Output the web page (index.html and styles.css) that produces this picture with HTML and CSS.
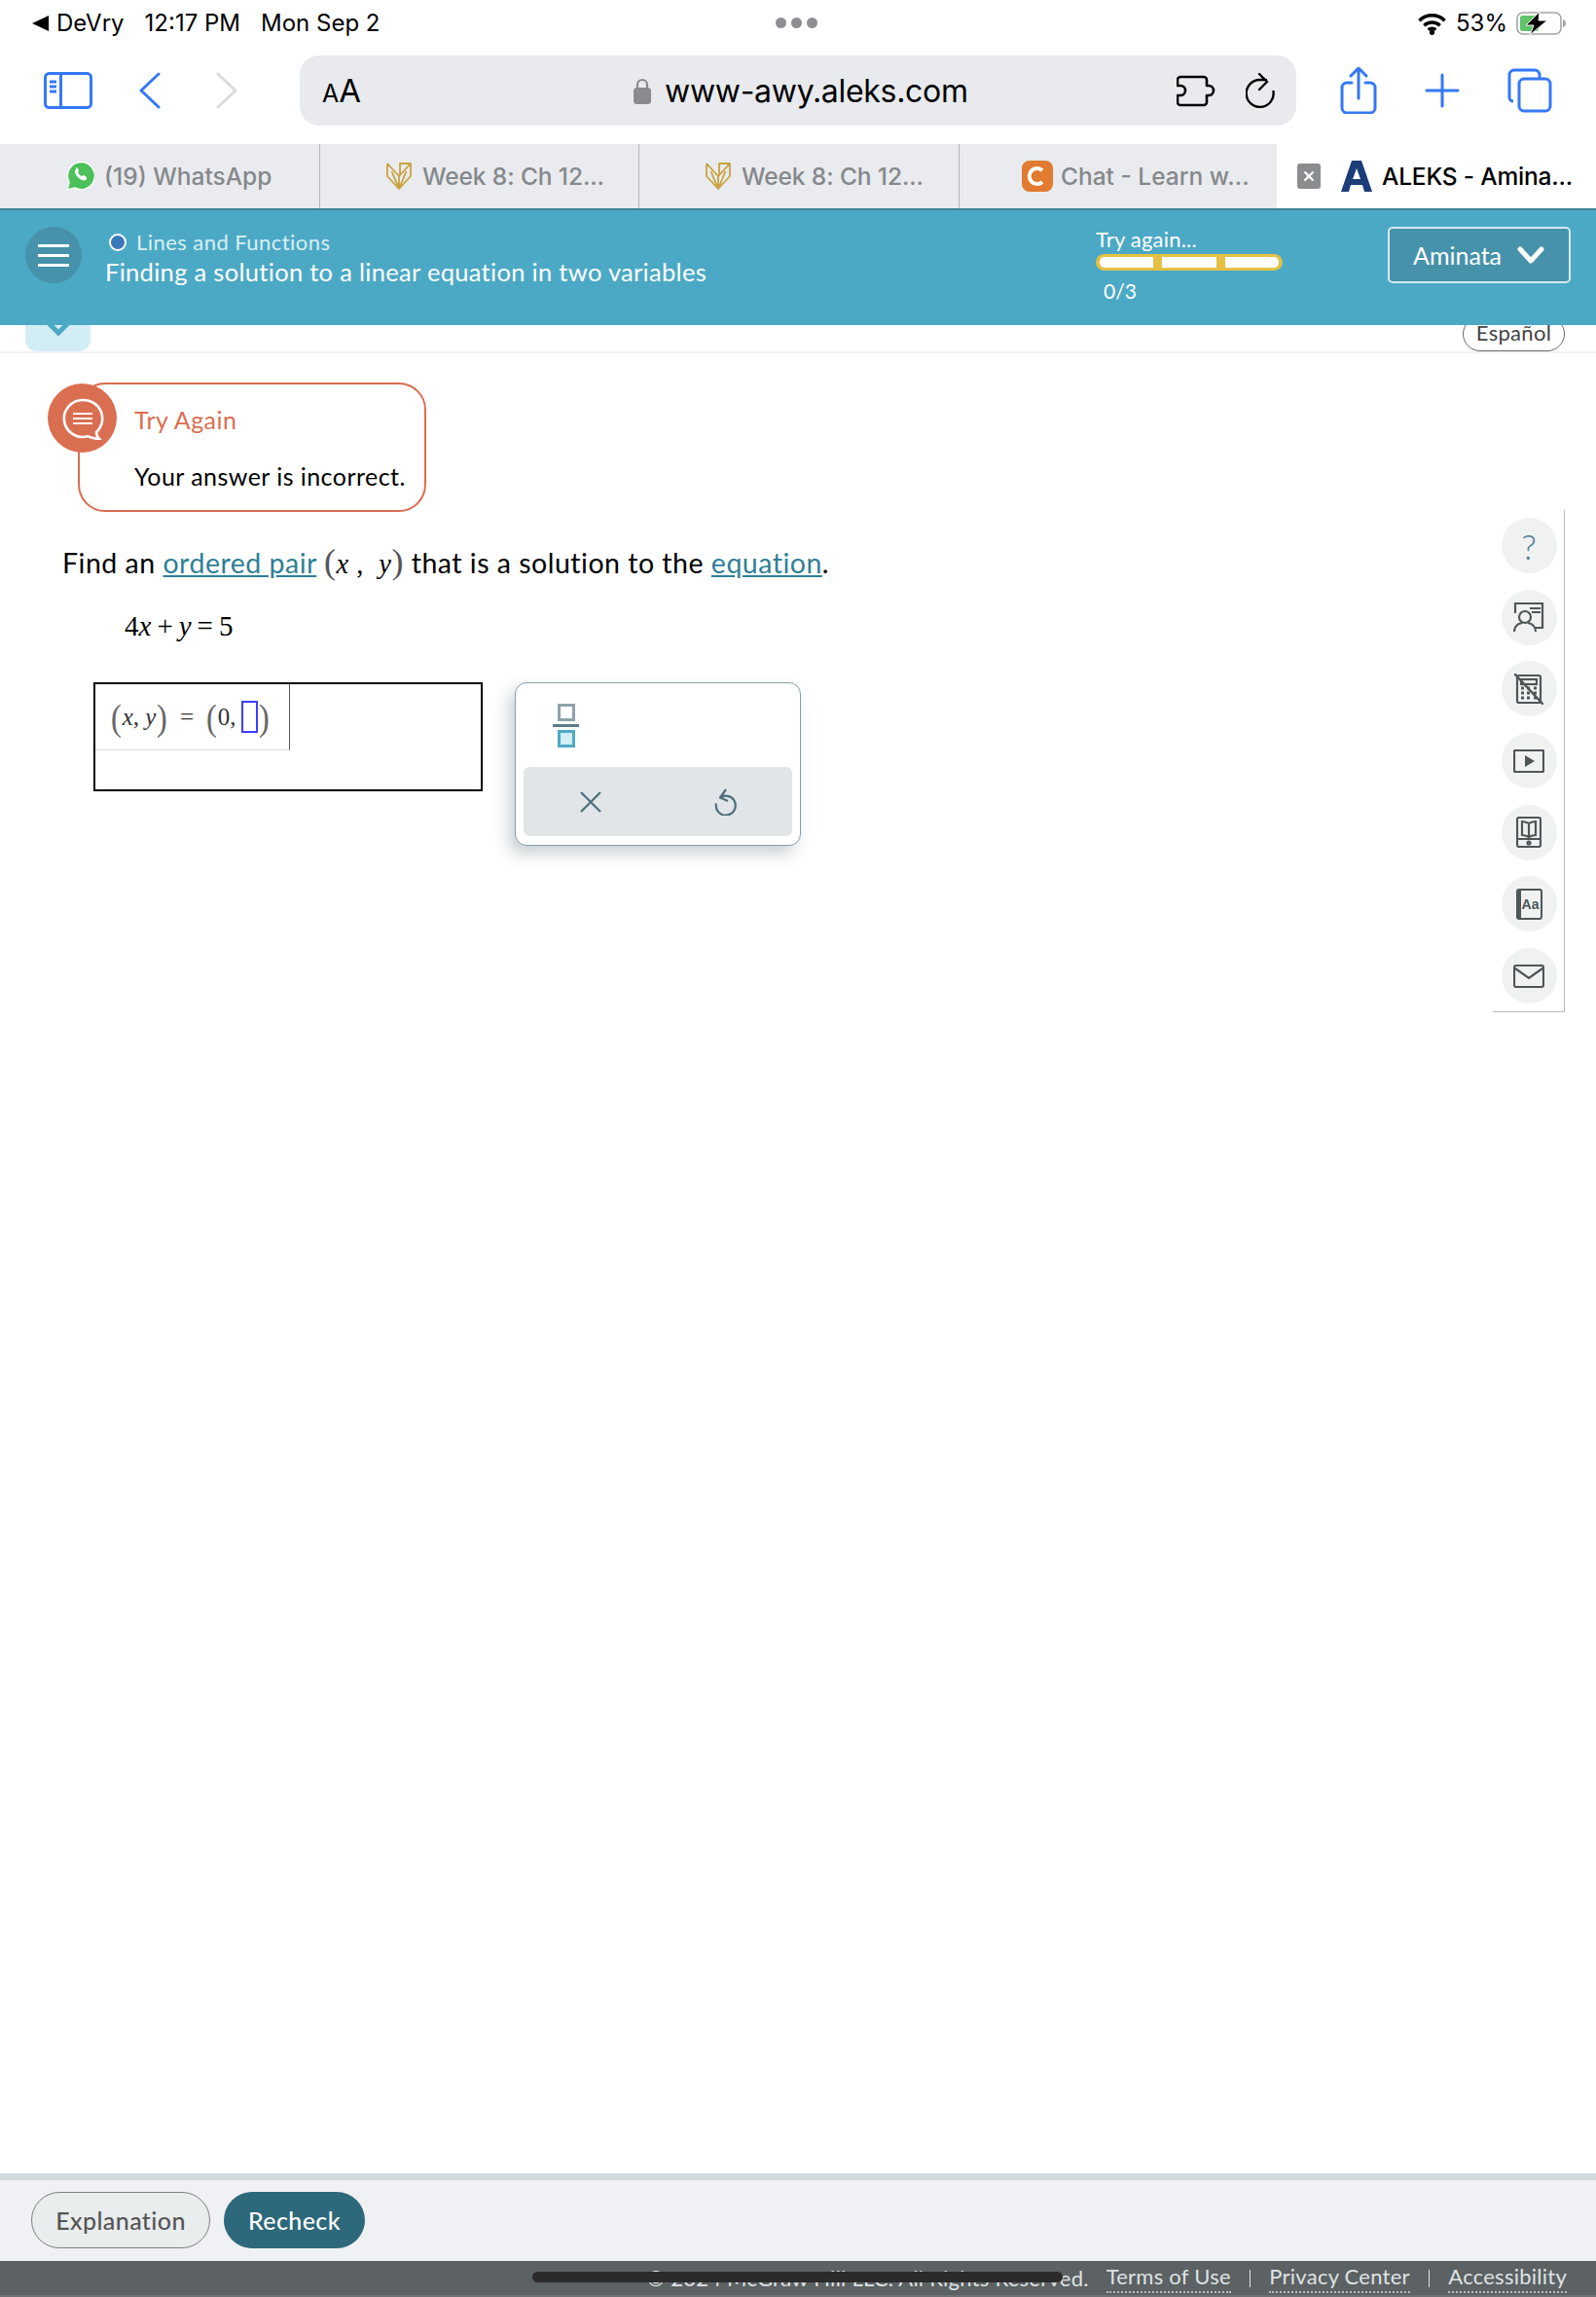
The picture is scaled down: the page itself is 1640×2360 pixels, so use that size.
FILE: index.html
```html
<!DOCTYPE html>
<html lang="en">
<head>
  <meta charset="UTF-8">
  <meta name="viewport" content="width=device-width, initial-scale=1.0">
  <title>ALEKS - Aminata</title>
  <link rel="stylesheet" href="styles.css">
</head>
<body>

  <div class="status-bar">
    <svg class="status-back" width="17" height="16" viewBox="0 0 17 16"><path d="M0 8 17 0v16z" fill="#000"/></svg>
    <span class="status-carrier">DeVry</span>
    <span class="status-time">12:17 PM</span>
    <span class="status-date">Mon Sep 2</span>
    <div class="status-dots"><i></i><i></i><i></i></div>
    <svg width="31" height="24" viewBox="0 0 28 22"><path d="M2 8.500a17 17 0 0 1 24 0M6.500 13a11 11 0 0 1 15 0M10.500 17a5.500 5.500 0 0 1 7 0" fill="none" stroke="#000" stroke-width="3.200"/><circle cx="14" cy="19.500" r="2.400" fill="#000"/></svg>
    <span class="status-pct">53%</span>
    <svg class="status-battery" width="52" height="24" viewBox="0 0 52 24"><rect x="1" y="1" width="45" height="22" rx="6" fill="none" stroke="#a5a5a5" stroke-width="1.600"/><rect x="4" y="4" width="19" height="16" rx="2.500" fill="#5fc368"/><path d="M48 8c2 .5 3 2 3 4s-1 3.500-3 4z" fill="#a5a5a5"/><path d="M24 0 10 14h8l-4 10 18-15h-9z" fill="#000" stroke="#fff" stroke-width="1"/></svg>
  </div>

  <div class="toolbar">
    <svg class="tool-sidebar" width="50" height="38" viewBox="0 0 50 38" fill="none" stroke="#3478f6" stroke-width="3"><rect x="1.500" y="1.500" width="47" height="35" rx="4"/><path d="M17.500 1.500v35M6 10h7M6 15h7M6 20h7"/></svg>
    <svg class="tool-back" width="22" height="38" viewBox="0 0 22 38" fill="none" stroke="#3478f6" stroke-width="3" stroke-linecap="round" stroke-linejoin="round"><path d="M20 2 2 19l18 17"/></svg>
    <svg class="tool-forward" width="22" height="38" viewBox="0 0 22 38" fill="none" stroke="#d9dbde" stroke-width="3" stroke-linecap="round" stroke-linejoin="round"><path d="M2 2l18 17L2 36"/></svg>
    <div class="address-bar">
      <span class="address-aa"><small>A</small>A</span>
      <div class="address-url">
        <svg width="18" height="27" viewBox="0 0 18 27"><path d="M4 12V7a5 5 0 0 1 10 0v5" fill="none" stroke="#8a8b8f" stroke-width="2.200"/><rect y="10" width="18" height="17" rx="3.500" fill="#8a8b8f"/></svg>
        <span>www-awy.aleks.com</span>
      </div>
      <svg class="address-puzzle" width="41" height="33" viewBox="0 0 41 33" fill="none" stroke="#000" stroke-width="2.600" stroke-linejoin="round"><path d="M4 2h24a3 3 0 0 1 3 3v6h2a5 5 0 0 1 0 10h-2v7a3 3 0 0 1-3 3H4a3 3 0 0 1-3-3v-7h3a5 5 0 0 0 0-10H1V5a3 3 0 0 1 3-3z"/></svg>
      <svg class="address-reload" width="30" height="36" viewBox="0 0 30 36" fill="none" stroke="#000" stroke-width="2.400" stroke-linecap="round" stroke-linejoin="round"><path d="M28.500 19A14 14 0 1 1 14.500 7H21M14 1l8 8-8 8"/></svg>
    </div>
    <svg class="tool-share" width="38" height="48" viewBox="0 0 38 48" fill="none" stroke="#3478f6" stroke-width="3" stroke-linecap="round" stroke-linejoin="round"><path d="M12 16H7a5 5 0 0 0-5 5v21a5 5 0 0 0 5 5h24a5 5 0 0 0 5-5V21a5 5 0 0 0-5-5h-5M19 32V2M11 9l8-8 8 8"/></svg>
    <svg class="tool-plus" width="36" height="36" viewBox="0 0 36 36" fill="none" stroke="#3478f6" stroke-width="3" stroke-linecap="round"><path d="M18 2v32M2 18h32"/></svg>
    <svg class="tool-tabs" width="46" height="46" viewBox="0 0 46 46" fill="none" stroke="#3478f6" stroke-width="3"><path d="M6 34a4 4 0 0 1-4-4V7a5 5 0 0 1 5-5h21a5 5 0 0 1 5 5v4"/><rect x="12" y="11" width="32" height="33" rx="5"/></svg>
  </div>

  <div class="tab-strip">
    <div class="tab">
      <svg width="29" height="30" viewBox="0 0 29 30"><path d="M1 29l2-8a14 14 0 1 1 6 6z" fill="#4cc15a" stroke="#fff" stroke-width="1.500"/><path d="M10 8c-2 2-1 5 2 8s6 4 8 3c1-1 1-2 1-3l-3-2-2 1c-2-1-3-2-4-4l1-2-2-3c-1 0-1 1-1 2z" fill="#fff"/></svg>
      <span>(19) WhatsApp</span>
    </div>
    <div class="tab tab-week">
      <svg width="26" height="28" viewBox="0 0 26 28" fill="none" stroke="#c9a23e" stroke-width="1.800" stroke-linejoin="round"><path d="M1 1v13l12 13 12-13V1H14v13M1 1l12 13v13M25 1 13 14M5.500 9 13 27M20.500 9 13 27"/></svg>
      <span>Week 8: Ch 12...</span>
    </div>
    <div class="tab tab-week">
      <svg width="26" height="28" viewBox="0 0 26 28" fill="none" stroke="#c9a23e" stroke-width="1.800" stroke-linejoin="round"><path d="M1 1v13l12 13 12-13V1H14v13M1 1l12 13v13M25 1 13 14M5.500 9 13 27M20.500 9 13 27"/></svg>
      <span>Week 8: Ch 12...</span>
    </div>
    <div class="tab tab-chat">
      <svg width="32" height="32" viewBox="0 0 32 32"><rect width="32" height="32" rx="8" fill="#e07b2f"/><path d="M21 10a8 8 0 1 0 0 12" fill="none" stroke="#fff" stroke-width="4"/></svg>
      <span>Chat - Learn w...</span>
    </div>
    <div class="tab tab-active">
      <svg class="tab-close" width="24" height="26" viewBox="0 0 24 26"><rect width="24" height="26" rx="3" fill="#8a8c90"/><path d="M7.500 8.500l9 9M16.500 8.500l-9 9" stroke="#fff" stroke-width="2.400"/></svg>
      <svg class="aleks-logo" width="32" height="32" viewBox="0 0 32 32"><path d="M11 0h10l11 32h-8l-2-7H10l-2 7H0zM16 8l-4 11h8z" fill="#1c3e78" fill-rule="evenodd"/></svg>
      <span>ALEKS - Amina...</span>
    </div>
  </div>

  <header class="course-header">
    <button class="menu-btn"><i></i><i></i><i></i></button>
    <div class="topic">
      <div class="topic-section"><span class="topic-dot"></span>Lines and Functions</div>
      <div class="topic-title">Finding a solution to a linear equation in two variables</div>
    </div>
    <div class="progress">
      <div class="progress-label">Try again...</div>
      <div class="progress-bar"><i></i><i></i><i></i></div>
      <div class="progress-count">0/3</div>
    </div>
    <button class="user-btn">Aminata
      <svg width="28" height="20" viewBox="0 0 28 20" fill="none" stroke="#fff" stroke-width="5" stroke-linecap="round" stroke-linejoin="round"><path d="M3 4l11 12L25 4"/></svg>
    </button>
  </header>

  <div class="sub-strip">
    <div class="collapse-tab">
      <svg width="30" height="16" viewBox="0 0 30 16" fill="none" stroke="#4ca9c5" stroke-width="5"><path d="M3 0l12 12L27 0"/></svg>
    </div>
    <div class="lang-pill">Español</div>
  </div>

  <main class="main">
    <div class="content">
      <div class="feedback">
        <div class="feedback-icon">
          <svg width="44" height="44" viewBox="0 0 44 44" fill="none" stroke="#fff"><path d="M22 3a19 19 0 1 0 5 37.300c4 1.500 8 2.700 12 2.700-2-2-3-4-3-7A19 19 0 0 0 22 3z" stroke-width="2.600"/><path d="M12 17h20M12 22h20M12 27h20" stroke-width="2"/></svg>
        </div>
        <div class="feedback-title">Try Again</div>
        <div class="feedback-text">Your answer is incorrect.</div>
      </div>

      <p class="question">Find an <a href="#">ordered pair</a> <span class="math"><span class="paren">(</span><em>x</em> , &nbsp;<em>y</em><span class="paren">)</span></span> that is a solution to the <a href="#">equation</a>.</p>
      <p class="equation"><span>4<em>x</em></span><span>+</span><span><em>y</em></span><span>=</span><span>5</span></p>

      <div class="work-row">
        <div class="answer-box">
          <div class="answer-cell">
            <span class="big-paren">(</span><em>x</em>,&nbsp;<em>y</em><span class="big-paren">)</span>
            <span class="answer-eq">=</span>
            <span class="big-paren">(</span>0,<span class="cursor-box"></span><span class="big-paren">)</span>
          </div>
        </div>
        <div class="palette">
          <div class="palette-top">
            <div class="fraction"><span class="frac-top"></span><span class="frac-bar"></span><span class="frac-bottom"></span></div>
          </div>
          <div class="palette-actions">
            <svg width="22" height="22" viewBox="0 0 22 22" fill="none" stroke="#4d6e7c" stroke-width="2.200"><path d="M1 1l20 20M21 1 1 21"/></svg>
            <svg width="24" height="28" viewBox="0 0 24 28" fill="none" stroke="#4d6e7c" stroke-width="2.200" stroke-linejoin="round"><path d="M7 9.500a10 10 0 1 1-4 6M13 1 7 9.500l8 3.500"/></svg>
          </div>
        </div>
      </div>
    </div>

    <aside class="tool-rail">
      <button class="rail-btn"><span class="rail-help">?</span></button>
      <button class="rail-btn">
        <svg width="32" height="32" viewBox="0 0 32 32" fill="none" stroke="#4f5658" stroke-width="2.200"><path d="M2 12V2h28v25h-8M17 7h11M19 11h9"/><circle cx="12" cy="16" r="6"/><path d="M1 31c0-6 3-8 8-9M23 31c0-6-3-8-8-9"/></svg>
      </button>
      <button class="rail-btn">
        <svg width="30" height="32" viewBox="0 0 30 32" fill="none" stroke="#4f5658" stroke-width="2.200"><rect x="3" y="2" width="24" height="28" rx="2"/><rect x="7" y="6" width="16" height="5"/><path d="M7 15h3M13 15h3M20 15h3M7 20h3M13 20h3M20 20h3M7 25h3M13 25h3M20 25h3" stroke-width="3"/><path d="M0 0l30 32" stroke-width="2.400"/></svg>
      </button>
      <button class="rail-btn">
        <svg width="32" height="24" viewBox="0 0 32 24" fill="none" stroke="#4f5658" stroke-width="2.200"><rect x="1" y="1" width="30" height="22" rx="1"/><path d="M12 6l10 6-10 6z" fill="#4f5658" stroke="none"/></svg>
      </button>
      <button class="rail-btn">
        <svg width="26" height="32" viewBox="0 0 26 32" fill="none" stroke="#4f5658" stroke-width="2.200"><rect x="1" y="1" width="24" height="30" rx="2"/><path d="M1 23h24M13 7c-2-1-4-2-7-2v14c3 0 5 1 7 2 2-1 4-2 7-2V5c-3 0-5 1-7 2zM13 7v14"/><circle cx="13" cy="27" r="1.500"/></svg>
      </button>
      <button class="rail-btn">
        <span class="rail-dict">Aa</span>
      </button>
      <button class="rail-btn">
        <svg width="32" height="24" viewBox="0 0 32 24" fill="none" stroke="#4f5658" stroke-width="2.200"><rect x="1" y="1" width="30" height="22" rx="2"/><path d="M2 4l14 10L30 4"/></svg>
      </button>
    </aside>
  </main>

  <div class="action-bar">
    <button class="btn-explain">Explanation</button>
    <button class="btn-recheck">Recheck</button>
  </div>

  <footer class="page-footer">
    <span class="copyright">© 2024 McGraw Hill LLC. All Rights Reserved.</span>
    <a href="#">Terms of Use</a>
    <span class="footer-sep"></span>
    <a href="#">Privacy Center</a>
    <span class="footer-sep"></span>
    <a href="#">Accessibility</a>
    <div class="home-indicator"></div>
  </footer>

</body>
</html>
```

FILE: styles.css
```css
* {
  box-sizing: border-box;
}

html,
body {
  margin: 0;
  height: 2360px;
  overflow: hidden;
}

body {
  display: flex;
  flex-direction: column;
  background-color: #fff;
  font-family: 'Lato', 'Open Sans', sans-serif;
  color: #000;
}

button {
  font-family: inherit;
  cursor: pointer;
  padding: 0;
}

/* ios status bar */
.status-bar {
  display: flex;
  align-items: center;
  height: 47px;
  padding: 0 30px 0 33px;
  font-family: 'Inter', sans-serif;
  font-size: 24px;
}

.status-carrier {
  margin-left: 8px;
}

.status-time {
  margin-left: 21px;
}

.status-date {
  margin-left: 21px;
}

.status-dots {
  display: flex;
  gap: 5px;
  margin-left: auto;
  margin-right: 616px;
}

.status-dots i {
  width: 11px;
  height: 11px;
  border-radius: 50%;
  background-color: #8e8e93;
}

.status-pct {
  margin-left: 9px;
}

.status-battery {
  margin-left: 9px;
}

/* safari toolbar */
.toolbar {
  display: flex;
  align-items: center;
  height: 101px;
  padding-bottom: 9px;
}

.tool-sidebar {
  margin-left: 45px;
}

.tool-back {
  margin-left: 48px;
}

.tool-forward {
  margin-left: 57px;
}

.address-bar {
  display: flex;
  align-items: center;
  position: relative;
  width: 1024px;
  height: 72px;
  margin-left: 64px;
  padding: 0 22px 0 23px;
  background-color: #e8eaed;
  border-radius: 20px;
  font-family: 'Inter', sans-serif;
}

.address-aa {
  font-size: 33px;
}

.address-aa small {
  font-size: 25px;
}

.address-url {
  display: flex;
  align-items: center;
  gap: 14px;
  margin-left: 280px;
  font-size: 32px;
  letter-spacing: -0.3px;
}

.address-puzzle {
  margin-left: auto;
}

.address-reload {
  margin-left: 30px;
}

.tool-share {
  margin-left: 45px;
}

.tool-plus {
  margin-left: 49px;
}

.tool-tabs {
  margin-left: 49px;
}

/* open tabs */
.tab-strip {
  display: grid;
  grid-template-columns: 328px 328px 329px 327px 328px;
  height: 66px;
  background-color: #e9ebee;
  font-family: 'Inter', sans-serif;
  font-size: 24.500px;
  font-weight: 500;
  color: #85888c;
}

.tab {
  display: flex;
  align-items: center;
  gap: 10px;
  padding-left: 68px;
  border-left: 1px solid #b3b6ba;
  white-space: nowrap;
}

.tab:first-child {
  border-left: none;
}

.tab-week {
  gap: 11px;
  letter-spacing: -0.1px;
}

.tab-chat {
  padding-left: 64px;
  gap: 8px;
}

.tab-active {
  padding-left: 21px;
  border-left: none;
  background-color: #fff;
  color: #000;
  letter-spacing: -0.2px;
}

.aleks-logo {
  margin-left: 11px;
}

/* teal course header */
.course-header {
  display: flex;
  position: relative;
  z-index: 2;
  height: 120px;
  padding-left: 26px;
  background-color: #4ca9c5;
  border-top: 2px solid #3f8296;
  color: #fff;
}

.menu-btn {
  display: flex;
  flex-direction: column;
  justify-content: center;
  align-items: center;
  gap: 7px;
  width: 58px;
  height: 58px;
  margin-top: 17px;
  background-color: #4692aa;
  border: none;
  border-radius: 50%;
}

.menu-btn i {
  width: 32px;
  height: 3px;
  background-color: #fff;
}

.topic {
  width: 1018px;
  margin-left: 24px;
  padding-top: 20px;
}

.topic-section {
  display: flex;
  align-items: center;
  margin-left: 4px;
  font-size: 22px;
  letter-spacing: 0.45px;
  line-height: 26px;
  color: #d8f0f6;
}

.topic-dot {
  width: 18px;
  height: 18px;
  margin-right: 10px;
  background-color: #3a78b8;
  border: 2px solid #fff;
  border-radius: 50%;
}

.topic-title {
  margin-top: 1px;
  font-size: 25.500px;
  letter-spacing: 0.3px;
  line-height: 32px;
}

.progress {
  width: 300px;
  padding-top: 17px;
}

.progress-label {
  font-size: 22px;
  letter-spacing: 0.2px;
  line-height: 26px;
}

.progress-bar {
  display: flex;
  gap: 9px;
  width: 192px;
  height: 17px;
  margin-top: 2px;
  padding: 3px 4px;
  background-color: #e4c144;
  border-radius: 9px;
}

.progress-bar i {
  flex: 1;
  background-color: #fff;
}

.progress-bar i:first-child {
  border-radius: 5px 0 0 5px;
}

.progress-bar i:last-child {
  border-radius: 0 5px 5px 0;
}

.progress-count {
  margin: 8px 0 0 8px;
  font-size: 21px;
  line-height: 26px;
}

.user-btn {
  display: flex;
  align-items: center;
  gap: 16px;
  width: 188px;
  height: 58px;
  margin-top: 17px;
  padding-left: 24px;
  background-color: #4692aa;
  border: 2px solid #d5eaf0;
  border-radius: 5px;
  color: #fff;
  font-size: 25px;
}

.sub-strip {
  display: flex;
  justify-content: space-between;
  align-items: flex-end;
  height: 29px;
  padding: 0 32px 0 26px;
  border-bottom: 2px solid #f3f3f3;
}

.collapse-tab {
  display: flex;
  justify-content: center;
  flex-shrink: 0;
  width: 67px;
  height: 31px;
  background-color: #d2eef4;
  border-radius: 0 0 12px 12px;
}

.lang-pill {
  flex-shrink: 0;
  width: 105px;
  height: 36px;
  border: 1px solid #666;
  border-radius: 18px;
  text-align: center;
  font-size: 22px;
  letter-spacing: 0.3px;
  line-height: 32px;
  color: #444;
}

/* question area */
.main {
  display: flex;
  flex: 1;
}

.content {
  flex: 1;
  padding-top: 30px;
}

.feedback {
  position: relative;
  width: 358px;
  height: 133px;
  margin-left: 80px;
  padding: 18px 0 0 56px;
  border: 2px solid #d96c50;
  border-radius: 28px;
}

.feedback-icon {
  position: absolute;
  top: -1px;
  left: -33px;
  display: flex;
  align-items: center;
  justify-content: center;
  width: 71px;
  height: 71px;
  background-color: #da6e51;
  border-radius: 50%;
}

.feedback-title {
  font-size: 25px;
  letter-spacing: 0.45px;
  line-height: 36px;
  color: #da6e51;
}

.feedback-text {
  margin-top: 22px;
  font-size: 25px;
  letter-spacing: 0.45px;
  line-height: 36px;
}

.question {
  margin: 30px 0 0 64px;
  font-size: 28.500px;
  letter-spacing: 0.5px;
  line-height: 44px;
}

.question a {
  color: #2f7f96;
}

.math {
  font-family: 'Liberation Serif', serif;
}

.paren {
  font-size: 36px;
  font-weight: 400;
  color: #555;
  line-height: 30px;
}

.equation {
  display: flex;
  gap: 6px;
  margin: 21px 0 0 128px;
  font-family: 'Liberation Serif', serif;
  font-size: 29px;
  line-height: 40px;
}

.work-row {
  display: flex;
  align-items: flex-start;
  gap: 33px;
  margin: 38px 0 0 96px;
}

.answer-box {
  width: 400px;
  height: 112px;
  border: 2px solid #000;
}

.answer-cell {
  display: flex;
  align-items: center;
  width: 200px;
  height: 68px;
  padding-left: 15px;
  border-right: 1px solid #555;
  border-bottom: 1px solid #ddd;
  font-family: 'Liberation Serif', serif;
  font-size: 25px;
  color: #333;
}

.big-paren {
  font-size: 38px;
  font-weight: 400;
  color: #666;
  line-height: 40px;
  transform: scaleX(0.85);
}

.answer-eq {
  margin: 0 12px 0 12px;
}

.cursor-box {
  width: 17px;
  height: 33px;
  margin-left: 5px;
  border: 2px solid #3d3dff;
}

.palette {
  width: 294px;
  height: 168px;
  padding: 0 8px;
  background-color: #fff;
  border: 1.500px solid #84a0ac;
  border-radius: 12px;
  box-shadow: -6px 8px 16px rgba(80, 100, 110, 0.3);
}

.palette-top {
  height: 86px;
  padding: 21px 0 0 30px;
}

.fraction {
  display: flex;
  flex-direction: column;
  align-items: center;
  width: 27px;
}

.frac-top {
  width: 18px;
  height: 18px;
  border: 3px solid #8fa3ab;
}

.frac-bar {
  width: 27px;
  height: 3px;
  margin: 3px 0;
  background-color: #5d7a86;
}

.frac-bottom {
  width: 18px;
  height: 18px;
  background-color: #d2eef4;
  border: 3px solid #4ca9c5;
}

.palette-actions {
  display: flex;
  justify-content: space-around;
  align-items: center;
  height: 71px;
  background-color: #e1e5e8;
  border-radius: 6px;
}

.tool-rail {
  display: flex;
  flex-direction: column;
  flex-shrink: 0;
  align-items: center;
  gap: 16.700px;
  width: 74px;
  height: 516px;
  margin: 161px 32px 0 0;
  padding: 8px 0 0 1px;
  border-right: 1px solid #bcbcbc;
  border-bottom: 1px solid #bcbcbc;
}

.rail-btn {
  display: flex;
  flex-shrink: 0;
  align-items: center;
  justify-content: center;
  width: 57px;
  height: 57px;
  background-color: #f0f2f2;
  border: none;
  border-radius: 50%;
}

.rail-help {
  font-size: 36px;
  font-weight: 300;
  color: #4f7f92;
}

.rail-dict {
  width: 27px;
  height: 32px;
  border: 2px solid #4f5658;
  border-left-width: 5px;
  border-radius: 3px;
  font-family: 'Liberation Sans', sans-serif;
  font-size: 14px;
  font-weight: 700;
  line-height: 28px;
  color: #4f5658;
}

/* bottom bars */
.action-bar {
  display: flex;
  gap: 14px;
  height: 90px;
  padding: 12px 0 0 32px;
  background-color: #f0f1f4;
  border-top: 7px solid #d1d9de;
}

.btn-explain,
.btn-recheck {
  height: 58px;
  border-radius: 29px;
  font-size: 25px;
  font-weight: 500;
  letter-spacing: 0.4px;
}

.btn-explain {
  width: 184px;
  background-color: #e9edee;
  border: 1.500px solid #7c8082;
  color: #555;
}

.btn-recheck {
  width: 145px;
  background-color: #2d687b;
  border: none;
  color: #fff;
}

.page-footer {
  display: flex;
  position: relative;
  align-items: center;
  justify-content: flex-end;
  height: 37px;
  padding: 0 30px 0 0;
  background-color: #5c6163;
  border-bottom: 2px solid #6d7274;
  font-size: 22px;
  letter-spacing: 0.25px;
  color: #dfe3e4;
}

.page-footer a {
  padding-bottom: 2px;
  border-bottom: 2px dotted #b8bcbe;
  color: #dfe3e4;
  text-decoration: none;
}

.copyright {
  margin-right: 18px;
}

.footer-sep {
  width: 1.500px;
  height: 18px;
  margin: 0 19px;
  background-color: #dfe3e4;
}

.home-indicator {
  position: absolute;
  top: 11px;
  left: 547px;
  width: 545px;
  height: 11px;
  background-color: #2b2b2b;
  border-radius: 6px;
}
```
